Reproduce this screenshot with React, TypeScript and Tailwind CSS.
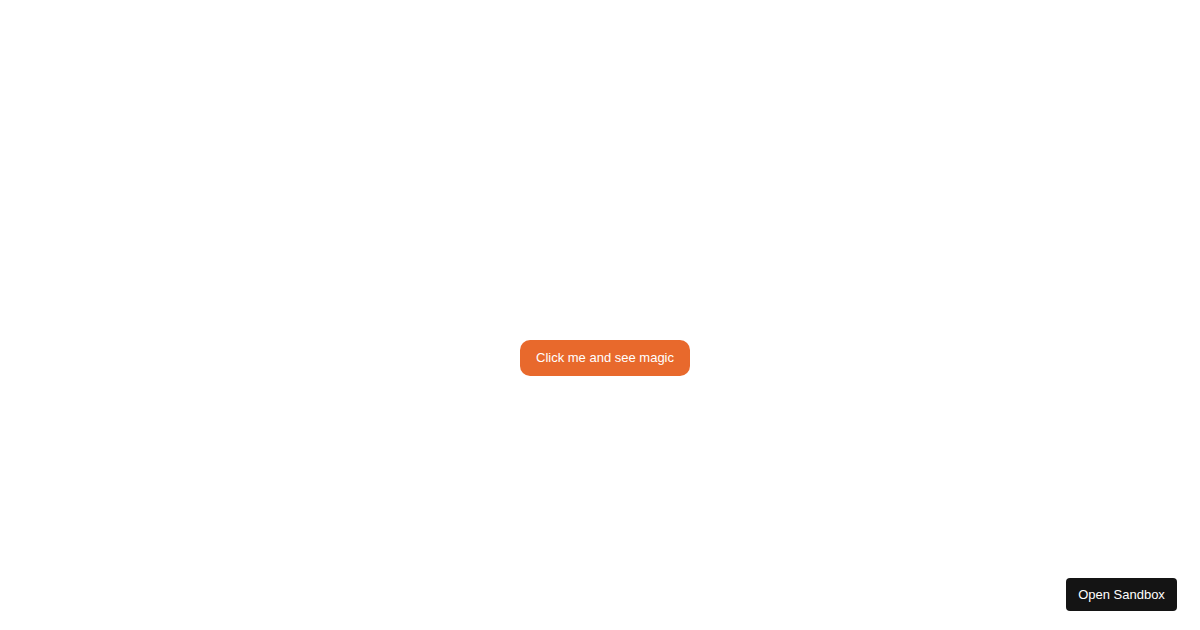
export default function App() {
  return (
    <div className="relative h-[630px] w-full bg-white font-['Liberation_Sans',Arial,sans-serif]">
      <div className="flex h-full items-center justify-center">
        {/* main action */}
        <button className="ml-[10px] mt-[86px] h-[36px] w-[170px] rounded-[10px] bg-[#e8692c] text-[13px] text-white">
          Click me and see magic
        </button>
      </div>

      <button className="absolute bottom-[19px] right-[23px] h-[33px] w-[111px] rounded-[4px] bg-[#141414] text-[13px] text-white">
        Open Sandbox
      </button>
    </div>
  )
}
